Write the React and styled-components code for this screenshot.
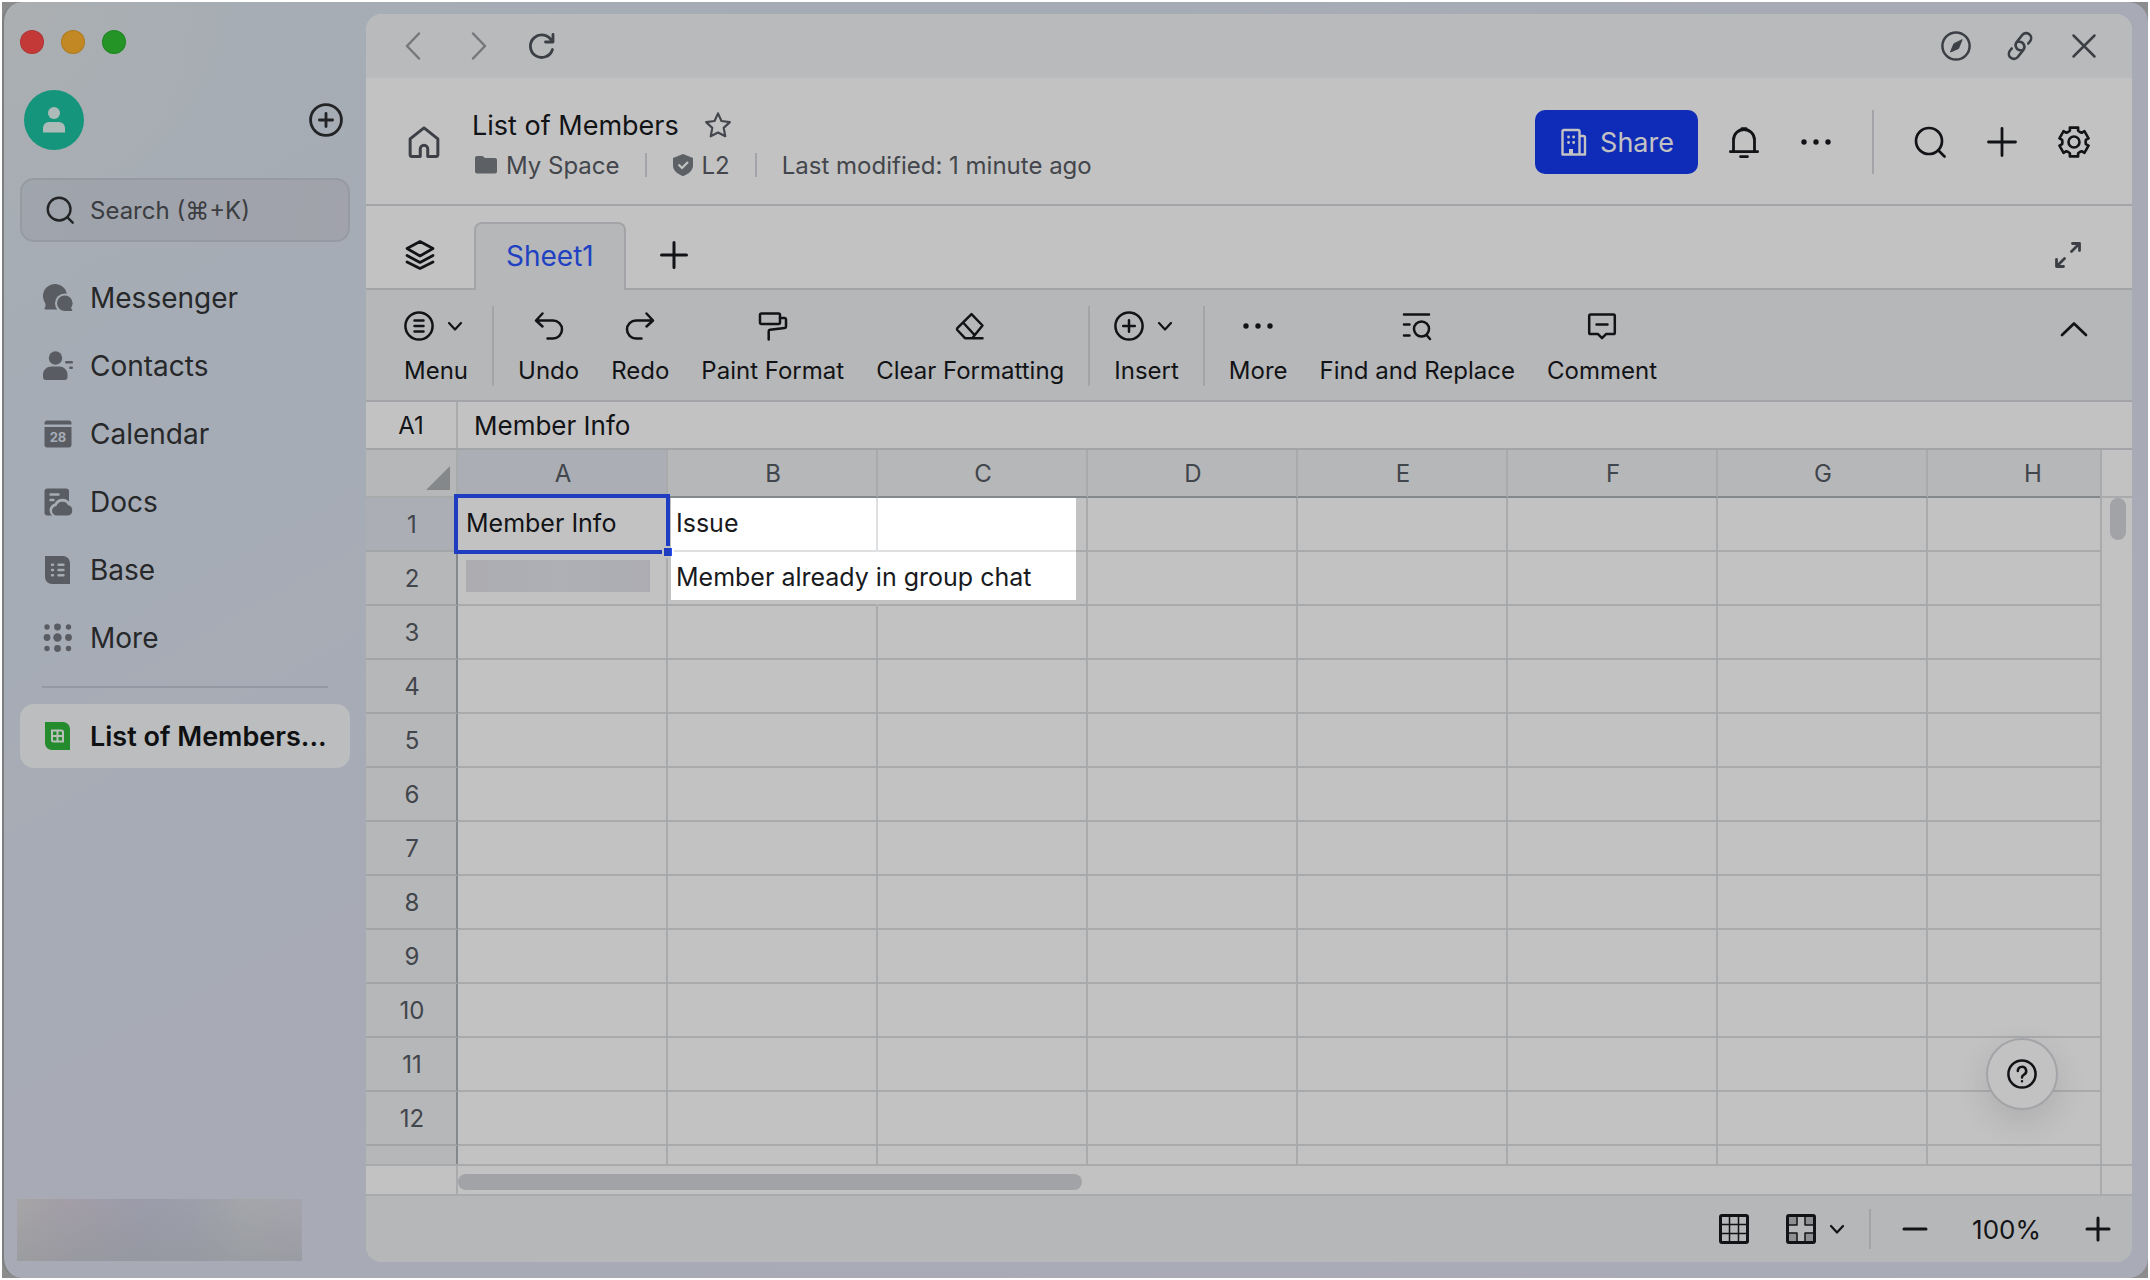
import styled, {createGlobalStyle, css} from "styled-components";
import {useState} from "react";

const GlobalStyle = createGlobalStyle`
  *, *::before, *::after {
    box-sizing: border-box;
  }

  body {
    margin: 0;
    background: #fff;
    color: #181a1d;
    font-family: Inter, "Liberation Sans", sans-serif;
    font-size: 24px;
  }

  button, input {
    font: inherit;
    color: inherit;
    border: 0;
    padding: 0;
    background: none;
  }

  button {
    cursor: pointer;
  }

  a {
    color: inherit;
    text-decoration: none;
  }

  svg {
    display: block;
    flex: none;
  }
`;

const line = "#d7d8dd";
const gridLine = "#dee0e2";
const darkLine = "#afb3b7";
const barBg = "#f0f1f3";

/* ---------- window ---------- */

const Screen = styled.div`
  height: 100vh;
  padding: 2px;
`;

const Desktop = styled.div`
  position: relative;
  height: 100%;
  overflow: hidden;
  background: #b8b8b8;
`;

const Window = styled.div`
  display: flex;
  height: 100%;
  border-radius: 20px;
  border-left: 2px solid #a4a8a8;
  background:
    radial-gradient(circle at 0 0, #e2e6e9 0, transparent 260px),
    linear-gradient(150deg, #dae4ed 0%, #dae3ee 18%, #dce1ee 36%, #dde0ee 55%, #dfe1f0 100%);
`;

/* 강조 영역 밖을 어둡게 덮는 마스크 */
const Spotlight = styled.div`
  position: absolute;
  z-index: 10;
  left: 669px;
  top: 496px;
  width: 405px;
  height: 102px;
  box-shadow: 0 0 0 9999px rgba(0, 0, 0, 0.24);
  pointer-events: none;
`;

/* ---------- sidebar ---------- */

const Sidebar = styled.aside`
  display: flex;
  flex-direction: column;
  flex: none;
  width: 362px;
  padding: 28px 16px 17px;
`;

const TrafficLights = styled.div`
  display: flex;
  gap: 17px;
`;

const Light = styled.button`
  width: 24px;
  height: 24px;
  border-radius: 50%;
  background: ${({$color}) => $color};
  box-shadow: inset 0 0 0 1px rgba(0, 0, 0, 0.1);
`;

const Profile = styled.div`
  display: flex;
  align-items: center;
  justify-content: space-between;
  margin-top: 36px;
  padding: 0 7px 0 4px;
`;

const Avatar = styled.button`
  display: grid;
  place-items: center;
  width: 60px;
  height: 60px;
  border-radius: 50%;
  background: #1cc5a3;
  color: #e3f6f2;
`;

const SearchBox = styled.label`
  display: flex;
  align-items: center;
  gap: 16px;
  height: 64px;
  margin-top: 28px;
  padding: 0 24px;
  border: 2px solid #c4cbd7;
  border-radius: 14px;
  background: linear-gradient(100deg, #d1d9e3, #d4d5e1);
  color: #2e3032;

  input {
    flex: 1;
    min-width: 0;
    outline: none;
  }

  input::placeholder {
    color: #4e5155;
    opacity: 1;
  }
`;

const Nav = styled.nav`
  display: flex;
  flex-direction: column;
  gap: 4px;
  margin-top: 24px;
`;

const NavItem = styled.a`
  display: flex;
  align-items: center;
  gap: 17px;
  height: 64px;
  padding: 0 16px 0 23px;
  border-radius: 14px;
  font-size: 28px;
  color: #333538;
  white-space: nowrap;

  svg {
    color: #757981;
  }

  ${({$active}) => $active && css`
    background: #f8f9fc;
    color: #151618;
    font-size: 27px;
    font-weight: 600;

    svg {
      color: #31b73e;
    }
  `}
`;

const NavDivider = styled.hr`
  width: calc(100% - 44px);
  height: 2px;
  margin: 16px auto;
  border: 0;
  background: #c3c8d5;
`;

const AccountPlate = styled.div`
  width: 285px;
  height: 62px;
  margin: auto 0 0 -3px;
  background:
    linear-gradient(180deg, transparent, rgba(190, 196, 202, 0.5)),
    linear-gradient(90deg, #dbd9dc 0%, #d6d0dc 18%, #cdcde0 42%, #cfd1e1 62%, #d8dadf 80%, #dad8e4 100%);
`;

/* ---------- content panel ---------- */

const Panel = styled.main`
  display: flex;
  flex-direction: column;
  flex: 1;
  min-width: 0;
  margin: 12px 16px 16px 0;
  border-radius: 16px;
  background: #fff;
  overflow: hidden;
`;

const IconButton = styled.button`
  display: flex;
  align-items: center;
  color: ${({$color}) => $color || "inherit"};
`;

const TopBar = styled.div`
  display: flex;
  align-items: center;
  gap: 34px;
  flex: none;
  height: 64px;
  padding: 0 33px 0 32px;
  background: #f4f5f6;
  color: #4f545b;
`;

const Spacer = styled.div`
  flex: 1;
`;

const Header = styled.header`
  display: flex;
  align-items: center;
  flex: none;
  height: 128px;
  padding: 2px 42px 0;
  border-bottom: 2px solid ${line};
`;

const HomeLink = styled.a`
  margin-right: 32px;
  color: #4f545b;
`;

const TitleBlock = styled.div`
  display: flex;
  flex-direction: column;
  gap: 4px;
  padding-bottom: 2px;
  color: #585d64;
`;

const TitleRow = styled.div`
  display: flex;
  align-items: center;
  gap: 25px;
  height: 44px;

  h1 {
    margin: 0;
    font-size: 27px;
    font-weight: 400;
    color: #181a1d;
  }
`;

const MetaRow = styled.div`
  display: flex;
  align-items: center;
  gap: 25px;
  height: 28px;
  padding-left: 2px;

  a, span {
    display: flex;
    align-items: center;
    gap: 8px;
  }
`;

const VDivider = styled.i`
  flex: none;
  width: 2px;
  height: ${({$height}) => $height}px;
  background: ${line};
`;

const Actions = styled.div`
  display: flex;
  align-items: center;
  gap: 40px;
  margin-left: 30px;
`;

const ShareButton = styled.button`
  display: flex;
  align-items: center;
  justify-content: center;
  gap: 12px;
  height: 64px;
  padding: 0 24px 0 25px;
  border-radius: 10px;
  background: #153af2;
  color: #fff;
  font-size: 27px;
`;

/* ---------- sheet tabs ---------- */

const TabBar = styled.div`
  display: flex;
  align-items: center;
  flex: none;
  height: 84px;
  padding: 16px 49px 0 39px;
  border-bottom: 2px solid ${line};
`;

const Tab = styled.button`
  height: 68px;
  margin: 0 33px -2px 39px;
  padding: 0 30px 2px;
  border: 2px solid ${line};
  border-bottom: 0;
  border-radius: 8px 8px 0 0;
  background: ${barBg};
  color: #2b56ff;
  font-size: 28px;
`;

/* ---------- toolbar ---------- */

const Toolbar = styled.div`
  display: flex;
  align-items: flex-start;
  gap: 24px;
  flex: none;
  height: 112px;
  padding: 16px 43px 0 38px;
  border-bottom: 2px solid ${line};
  background: ${barBg};
`;

const ToolGroup = styled.div`
  display: flex;
  gap: 32px;
`;

const ToolButton = styled.button`
  display: flex;
  flex-direction: column;
  align-items: ${({$menu}) => ($menu ? "flex-start" : "center")};
  gap: 16px;
  height: 80px;
  padding-top: 5px;
  line-height: 28px;
  white-space: nowrap;

  span {
    display: flex;
    align-items: center;
    gap: 13px;
    height: 30px;
  }
`;

const CollapseButton = styled(IconButton)`
  height: 46px;
`;

/* ---------- formula bar ---------- */

const FormulaBar = styled.div`
  display: flex;
  flex: none;
  height: 48px;
  border-bottom: 2px solid ${line};
`;

const CellName = styled.input`
  width: 92px;
  border-right: 2px solid ${gridLine};
  text-align: center;
`;

const FormulaInput = styled.input`
  flex: 1;
  min-width: 0;
  padding: 0 16px;
  font-size: 26px;
`;

/* ---------- grid ---------- */

const SheetBody = styled.div`
  position: relative;
  display: flex;
  flex: 1;
  min-height: 0;
  border-bottom: 2px solid ${gridLine};
`;

const GridPane = styled.div`
  flex: 1;
  min-width: 0;
  overflow: hidden;
  border-right: 2px solid ${gridLine};
`;

const Grid = styled.table`
  width: 1772px;
  table-layout: fixed;
  border-collapse: separate;
  border-spacing: 0;

  col {
    width: 210px;
  }

  col:first-child {
    width: 92px;
  }
`;

const ColHead = styled.th`
  height: 48px;
  padding: 1px 0 0 2px;
  border-right: 2px solid ${gridLine};
  border-bottom: 2px solid ${darkLine};
  background: ${({$selected}) => ($selected ? "#e2e5ef" : barBg)};
  color: #565b64;
  font-weight: 400;
`;

const Corner = styled(ColHead)`
  padding: 0;
  border-bottom-color: ${gridLine};

  &::after {
    content: "";
    display: block;
    width: 24px;
    height: 24px;
    margin: 16px 6px 6px auto;
    background: ${darkLine};
    clip-path: polygon(100% 0, 100% 100%, 0 100%);
  }
`;

const RowHead = styled.th`
  height: 54px;
  padding: 1px 0 0 2px;
  border-right: 2px solid ${darkLine};
  border-bottom: 2px solid ${line};
  background: ${({$selected}) => ($selected ? "#e2e5ef" : barBg)};
  color: #565b64;
  font-weight: 400;
`;

const Cell = styled.td`
  position: relative;
  height: 54px;
  padding: 0 8px 2px;
  border-right: 2px solid ${({$spill}) => ($spill ? "transparent" : gridLine)};
  border-bottom: 2px solid ${gridLine};
  font-size: 25px;
  line-height: 32px;
  white-space: nowrap;
`;

const Selection = styled.div`
  position: absolute;
  z-index: 1;
  inset: -4px;
  border: 4px solid #2951fd;

  &::after {
    content: "";
    position: absolute;
    right: -6px;
    bottom: -6px;
    width: 8px;
    height: 8px;
    background: #2951fd;
    box-shadow: 0 0 0 2px #fff;
  }
`;

const Redacted = styled.div`
  width: 184px;
  height: 32px;
  margin-bottom: 2px;
  background: linear-gradient(90deg, #e2e2e8, #e6e8ee 50%, #e3e3ea);
`;

const VRail = styled.div`
  flex: none;
  width: 30px;
  padding: 0 6px 0 8px;

  &::before {
    content: "";
    display: block;
    height: 48px;
    margin: 0 -6px 0 -8px;
    border-bottom: 2px solid ${gridLine};
  }
`;

const Thumb = styled.div`
  width: ${({$width}) => $width};
  height: ${({$height}) => $height};
  border-radius: 8px;
  background: #d5d6db;
`;

const HRail = styled.div`
  display: flex;
  flex: none;
  height: 30px;
  border-bottom: 2px solid ${gridLine};
`;

const RailCorner = styled.div`
  width: 92px;
  border-right: 2px solid ${gridLine};
`;

const RailTrack = styled.div`
  flex: 1;
  margin-right: 30px;
  padding-top: 8px;
  border-right: 2px solid ${gridLine};
`;

const HelpButton = styled.button`
  position: absolute;
  right: 74px;
  bottom: 54px;
  display: grid;
  place-items: center;
  width: 72px;
  height: 72px;
  border: 2px solid ${line};
  border-radius: 50%;
  background: #fff;
  box-shadow: 0 12px 32px rgba(31, 35, 41, 0.12);
`;

const Footer = styled.footer`
  display: flex;
  align-items: center;
  justify-content: flex-end;
  flex: none;
  gap: 24px;
  height: 66px;
  padding-right: 21px;
  background: ${barBg};
`;

const ViewTools = styled.div`
  display: flex;
  align-items: center;
  gap: 37px;
`;

const ZoomTools = styled.div`
  display: flex;
  align-items: center;
  gap: 44px;
  padding-left: 7px;
`;

const ZoomValue = styled.button`
  font-size: 26px;
`;

const SplitButton = styled(IconButton)`
  gap: 13px;
`;

/* ---------- icons ---------- */

const Stroke = ({size = 30, box = 30, width = 2.5, children}) => (
    <svg width={size} height={size} viewBox={`0 0 ${box} ${box}`} fill="none" stroke="currentColor"
         strokeWidth={width} strokeLinecap="round" strokeLinejoin="round" aria-hidden="true">
        {children}
    </svg>
);

const Fill = ({size = 30, box = 30, children}) => (
    <svg width={size} height={size} viewBox={`0 0 ${box} ${box}`} fill="currentColor" aria-hidden="true">
        {children}
    </svg>
);

const Chevron = () => (
    <svg width="16" height="16" viewBox="0 0 16 16" fill="none" stroke="currentColor" strokeWidth="2.2"
         strokeLinecap="round" strokeLinejoin="round" aria-hidden="true">
        <path d="M2 5l6 6.5L14 5"/>
    </svg>
);

// 톱니 6개짜리 기어 외곽선
const gearPoints = Array.from({length: 6}, (_, i) => {
    const at = (deg, r) => {
        const rad = (deg * Math.PI) / 180;
        return `${(16 + r * Math.cos(rad)).toFixed(2)},${(16 + r * Math.sin(rad)).toFixed(2)}`;
    };
    const c = i * 60 - 90;
    return [at(c - 20, 12), at(c - 16, 15), at(c + 16, 15), at(c + 20, 12), at(c + 30, 11.6)].join(" ");
}).join(" ");

const PersonIcon = () => (
    <Fill size={28} box={28}>
        <circle cx="14" cy="7" r="6"/>
        <path d="M3 26.5V22a6 6 0 0 1 6-6h10a6 6 0 0 1 6 6v4.5z"/>
    </Fill>
);

const CirclePlusIcon = ({size}) => (
    <Stroke size={size}>
        <circle cx="15" cy="15" r="13.6"/>
        <path d="M15 9.2v11.6M9.2 15h11.6"/>
    </Stroke>
);

const MessengerIcon = () => (
    <Fill>
        <mask id="bubble-cut">
            <rect width="30" height="30" fill="#fff"/>
            <circle cx="21.8" cy="20.2" r="9.8" fill="#000"/>
        </mask>
        <g mask="url(#bubble-cut)">
            <circle cx="12" cy="13" r="12"/>
            <path d="M2.5 20v3.5l-.8 1.3c-.5.9 0 1.7 1 1.7H14V20z"/>
        </g>
        <circle cx="21.8" cy="20.2" r="7.8"/>
        <path d="M22 28h6.3c.9 0 1.300-.8.8-1.5l-1-1.3V22H22z"/>
    </Fill>
);

const ContactsIcon = () => (
    <Fill>
        <circle cx="12.5" cy="7" r="6.7"/>
        <path d="M0 26v-2.5C0 19 4 15.5 8.5 15.5h7.5c4.5 0 8.5 3.5 8.5 8V26a3 3 0 0 1-3 3H3a3 3 0 0 1-3-3z"/>
        <rect x="22" y="10" width="8" height="2.6" rx="1.3"/>
        <rect x="26" y="15.4" width="4" height="2.6" rx="1.3"/>
    </Fill>
);

const CalendarIcon = () => (
    <Fill>
        <path d="M1.5 4.2A2.7 2.7 0 0 1 4.2 1.5h21.6a2.7 2.7 0 0 1 2.7 2.7v1.2h-27z"/>
        <path d="M1.5 8h27v17.8a2.7 2.7 0 0 1-2.7 2.7H4.2a2.7 2.7 0 0 1-2.7-2.7z"/>
        <text x="15" y="22.5" textAnchor="middle" fontSize="13" fontWeight="700" fill="#dbe2ee">28</text>
    </Fill>
);

const DocsIcon = () => (
    <Fill>
        <mask id="cloud-cut">
            <rect width="30" height="30" fill="#fff"/>
            <path d="M7.5 7.5h8M7.5 13h3" stroke="#000" strokeWidth="2.4" strokeLinecap="round"/>
            <path d="M14 28a4.7 4.7 0 0 1-.5-9.4 6.3 6.3 0 0 1 11.6-.8A5.2 5.2 0 0 1 25 28z"
                  fill="#000" stroke="#000" strokeWidth="5"/>
        </mask>
        <rect mask="url(#cloud-cut)" x="1.5" y="1.5" width="24.5" height="27" rx="3"/>
        <path d="M14 28.5a4.7 4.7 0 0 1-.5-9.4 6.3 6.3 0 0 1 11.6-.8A5.2 5.2 0 0 1 25 28.5z"/>
    </Fill>
);

const BaseIcon = () => (
    <Fill>
        <path d="M2 1h18a7 7 0 0 1 7 7v21H9a7 7 0 0 1-7-7z"/>
        <path d="M9 9.8h1M9 15h1M9 20.2h1M15.5 9.8h5M15.5 15h5M15.5 20.2h5"
              stroke="#dbe1ec" strokeWidth="2.4" strokeLinecap="round"/>
    </Fill>
);

const SheetDocIcon = () => (
    <Fill>
        <path d="M2 1h18a7 7 0 0 1 7 7v21H9a7 7 0 0 1-7-7z"/>
        <path d="M9 9.5h9.5A1.5 1.5 0 0 1 20 11v9.5h-9.5A1.5 1.5 0 0 1 9 19zM14.5 9.5v11M9 15h11"
              fill="none" stroke="#f3fbf4" strokeWidth="2"/>
    </Fill>
);

const MoreDotsIcon = () => (
    <Fill>
        {[4, 14.5, 25.5].map((y, row) => [4, 14.5, 25.5].map((x, col) => (
            <circle key={`${x}-${y}`} cx={x} cy={y} r={row === 1 && col === 1 ? 4.2 : row === 1 || col === 1 ? 3.4 : 2.7}/>
        )))}
    </Fill>
);

const SearchIcon = ({size = 30}) => (
    <Stroke size={size} box={32} width={2.7}>
        <circle cx="15" cy="15" r="13"/>
        <path d="M24.5 24.5l6 6"/>
    </Stroke>
);

const EllipsisIcon = () => (
    <Fill size={32} box={32}>
        <circle cx="4" cy="16" r="2.7"/>
        <circle cx="16" cy="16" r="2.7"/>
        <circle cx="28" cy="16" r="2.7"/>
    </Fill>
);

const LinkIcon = () => (
    <Stroke width={2.6}>
        <g transform="translate(15 15) rotate(-52)">
            <path d="M7 5H10A5 5 0 0 0 10-5H1A5 5 0 0 0-2.500 3.600"/>
            <path d="M-7-5H-10A5 5 0 0 0-10 5H-1A5 5 0 0 0 2.500-3.600"/>
        </g>
    </Stroke>
);

/* ---------- data ---------- */

const navItems = [
    {label: "Messenger", icon: <MessengerIcon/>},
    {label: "Contacts", icon: <ContactsIcon/>},
    {label: "Calendar", icon: <CalendarIcon/>},
    {label: "Docs", icon: <DocsIcon/>},
    {label: "Base", icon: <BaseIcon/>},
    {label: "More", icon: <MoreDotsIcon/>},
];

const toolGroups = [
    [
        {
            label: "Menu",
            menu: true,
            icon: <Stroke><circle cx="15" cy="15" r="13.6"/><path d="M10.5 9.5h9M10.5 15h9M10.5 20.5h9"/></Stroke>,
        },
    ],
    [
        {
            label: "Undo",
            icon: <Stroke><path d="M8.5 2.5L2 9.500l6.500 6M2.500 9.500H19a9 9 0 0 1 0 18h-5.500"/></Stroke>,
        },
        {
            label: "Redo",
            icon: <Stroke><path d="M21.5 2.5l6.500 7-6.500 6M27.500 9.500H11a9 9 0 0 0 0 18h5.500"/></Stroke>,
        },
        {
            label: "Paint Format",
            icon: (
                <Stroke>
                    <rect x="2" y="2.5" width="20" height="10.5" rx="1.5"/>
                    <path d="M22 7h4.500a1.500 1.500 0 0 1 1.500 1.500v7a1.500 1.500 0 0 1-1.300 1.500L12 18.800a1.500 1.500 0 0 0-1.300 1.500V28.500"/>
                </Stroke>
            ),
        },
        {
            label: "Clear Formatting",
            icon: (
                <Stroke>
                    <path d="M16.5 3.200l11 11.300-10.300 12.700H10L2.300 19a1.500 1.500 0 0 1 0-1.800zM9 12.500l10.500 11.500M17 27.200h10.500"/>
                </Stroke>
            ),
        },
    ],
    [
        {label: "Insert", menu: true, icon: <CirclePlusIcon/>},
    ],
    [
        {label: "More", icon: <EllipsisIcon/>},
        {
            label: "Find and Replace",
            icon: (
                <Stroke>
                    <path d="M2 3.500h25M2 13.500h5.500M2 24.500h5.500M24.500 24l3.500 4"/>
                    <circle cx="19.5" cy="18" r="7.5"/>
                </Stroke>
            ),
        },
        {
            label: "Comment",
            icon: (
                <Stroke>
                    <path d="M3.500 3.500h23a1.300 1.300 0 0 1 1.300 1.300v17a1.300 1.300 0 0 1-1.300 1.300H19l-4 4-4-4H3.500a1.300 1.300 0 0 1-1.300-1.300v-17a1.300 1.300 0 0 1 1.300-1.300zM9.500 13.500h11"/>
                </Stroke>
            ),
        },
    ],
];

const columns = ["A", "B", "C", "D", "E", "F", "G", "H"];
const rows = Array.from({length: 12}, (_, i) => i + 1);

const cells = {
    A1: <>Member Info<Selection/></>,
    A2: <Redacted/>,
    B1: "Issue",
    B2: "Member already in group chat",
};

/* ---------- components ---------- */

const SideMenu = () => (
    <Sidebar>
        <TrafficLights>
            <Light $color="#ff4c4a" aria-label="Close window"/>
            <Light $color="#feb32e" aria-label="Minimize window"/>
            <Light $color="#2ec331" aria-label="Zoom window"/>
        </TrafficLights>
        <Profile>
            <Avatar aria-label="Profile"><PersonIcon/></Avatar>
            <IconButton $color="#2e3032" aria-label="Create"><CirclePlusIcon size={34}/></IconButton>
        </Profile>
        <SearchBox>
            <SearchIcon size={28}/>
            <input type="text" placeholder="Search (⌘+K)" aria-label="Search"/>
        </SearchBox>
        <Nav>
            {navItems.map(({label, icon}) => (
                <NavItem key={label} href="#">{icon}{label}</NavItem>
            ))}
        </Nav>
        <NavDivider/>
        <NavItem href="#" $active><SheetDocIcon/>List of Members...</NavItem>
        <AccountPlate/>
    </Sidebar>
);

const BrowserBar = () => (
    <TopBar>
        <IconButton $color="#9a9da1" aria-label="Back"><Stroke><path d="M21 2.5L9 15l12 12.5"/></Stroke></IconButton>
        <IconButton $color="#9a9da1" aria-label="Forward"><Stroke><path d="M11 2.5L23 15 11 27.5"/></Stroke></IconButton>
        <IconButton aria-label="Reload">
            <Stroke width={2.8}>
                <path d="M26.5 18.5A11.3 11.3 0 1 1 26 10.5M27 3.5V11h-7.5"/>
            </Stroke>
        </IconButton>
        <Spacer/>
        <IconButton aria-label="Open in browser">
            <Stroke>
                <circle cx="15" cy="15" r="13.6"/>
                <path d="M21 9l-3.500 8.500L9.500 21l3.300-8z" fill="currentColor" strokeWidth="1"/>
            </Stroke>
        </IconButton>
        <IconButton aria-label="Copy link"><LinkIcon/></IconButton>
        <IconButton aria-label="Close"><Stroke><path d="M4.5 4.5l21 21M25.5 4.5l-21 21"/></Stroke></IconButton>
    </TopBar>
);

const DocHeader = () => (
    <Header>
        <HomeLink href="#" aria-label="Home">
            <Stroke width={2.8} size={32}>
                <path d="M2 12L15 1.8 28 12v15a1.5 1.5 0 0 1-1.5 1.5h-8v-7a3.5 3.5 0 0 0-7 0v7h-8A1.5 1.5 0 0 1 2 27z"/>
            </Stroke>
        </HomeLink>
        <TitleBlock>
            <TitleRow>
                <h1>List of Members</h1>
                <IconButton aria-label="Add to favorites">
                    <Stroke size={28} width={2.3}>
                        <path d="M15 2.5l3.700 8.200 9 1.200-6.600 6.200 1.700 9-7.800-4-7.800 4 1.700-9-6.600-6.200 9-1.200z"/>
                    </Stroke>
                </IconButton>
            </TitleRow>
            <MetaRow>
                <a href="#">
                    <Fill size={24} box={24}>
                        <path d="M1 5a2 2 0 0 1 2-2h5.5L11 5h10a2 2 0 0 1 2 2v11.5a2 2 0 0 1-2 2H3a2 2 0 0 1-2-2z" fill="#7b8087"/>
                    </Fill>
                    My Space
                </a>
                <VDivider $height={24}/>
                <span>
                    <svg width="22" height="24" viewBox="0 0 22 24" aria-hidden="true">
                        <path d="M11 1l10 4v7.5c0 5-4.500 8.500-10 10.700C5.500 21 1 17.500 1 12.500V5z" fill="#7b8087"/>
                        <path d="M6.5 11.5L10 15l6-6" fill="none" stroke="#fff" strokeWidth="2.2"/>
                    </svg>
                    L2
                </span>
                <VDivider $height={24}/>
                <span>Last modified: 1 minute ago</span>
            </MetaRow>
        </TitleBlock>
        <Spacer/>
        <ShareButton>
            <Stroke size={28} box={28} width={2.4}>
                <path d="M2.5 26.5v-23A1.5 1.5 0 0 1 4 2h14a1.5 1.5 0 0 1 1.5 1.5v23zM19.5 8h4A1.5 1.5 0 0 1 25 9.500v17h-5.500"/>
                <path d="M8.5 9h.1M13.6 9h.1M8.5 14.5h.1M13.6 14.5h.1" strokeWidth="2.8"/>
                <path d="M11 26v-5" strokeWidth="4" strokeLinecap="butt"/>
            </Stroke>
            Share
        </ShareButton>
        <Actions>
            <IconButton aria-label="Notifications">
                <Stroke size={32} box={32} width={2.8}>
                    <path d="M5.5 25.5V14a10.5 10.5 0 0 1 21 0v11.500M2.400 25.700h27.200M12.500 30.600h7"/>
                    <path d="M14 2.6h4"/>
                </Stroke>
            </IconButton>
            <IconButton aria-label="More actions"><EllipsisIcon/></IconButton>
            <VDivider $height={64}/>
            <IconButton aria-label="Search"><SearchIcon size={32}/></IconButton>
            <IconButton aria-label="New">
                <Stroke size={32} box={32} width={2.8}><path d="M16 2.5v27M2.5 16h27"/></Stroke>
            </IconButton>
            <IconButton aria-label="Settings">
                <Stroke size={32} box={32} width={2.6}>
                    <polygon points={gearPoints}/>
                    <circle cx="16" cy="16" r="5.5"/>
                </Stroke>
            </IconButton>
        </Actions>
    </Header>
);

const SheetTabs = () => (
    <TabBar>
        <IconButton aria-label="All sheets">
            <Stroke width={2.7}>
                <path d="M15 1.5l13 7L15 16 2 8.5zM2 15.5l13 7 13-7M2 22l13 6.5L28 22"/>
            </Stroke>
        </IconButton>
        <Tab>Sheet1</Tab>
        <IconButton aria-label="Add sheet"><Stroke width={3}><path d="M15 2.5v25M2.5 15h25"/></Stroke></IconButton>
        <Spacer/>
        <IconButton $color="#4f545b" aria-label="Full screen">
            <Stroke width={2.8}>
                <path d="M19.5 3.500h7v7M26 4l-7.500 7.500M3.500 19.500v7h7M4 26l7.500-7.500"/>
            </Stroke>
        </IconButton>
    </TabBar>
);

const SheetToolbar = () => (
    <Toolbar>
        {toolGroups.map((group, i) => [
            i > 0 && <VDivider key={`divider-${i}`} $height={80}/>,
            <ToolGroup key={i}>
                {group.map(({label, icon, menu}) => (
                    <ToolButton key={label} $menu={menu}>
                        <span>{icon}{menu && <Chevron/>}</span>
                        {label}
                    </ToolButton>
                ))}
            </ToolGroup>,
        ])}
        <Spacer/>
        <CollapseButton aria-label="Collapse toolbar"><Stroke width={2.7}><path d="M3 21L15 9.5 27 21"/></Stroke></CollapseButton>
    </Toolbar>
);

const Spreadsheet = () => (
    <>
        <SheetBody>
            <GridPane>
                <Grid>
                    <colgroup>
                        <col/>
                        {columns.map(col => <col key={col}/>)}
                    </colgroup>
                    <thead>
                        <tr>
                            <Corner/>
                            {columns.map(col => <ColHead key={col} scope="col" $selected={col === "A"}>{col}</ColHead>)}
                        </tr>
                    </thead>
                    <tbody>
                        {rows.map(row => (
                            <tr key={row}>
                                <RowHead scope="row" $selected={row === 1}>{row}</RowHead>
                                {columns.map(col => (
                                    <Cell key={col} $spill={col + row === "B2"}>{cells[col + row]}</Cell>
                                ))}
                            </tr>
                        ))}
                        {/* 아래쪽에 걸친 빈 행 */}
                        <tr>
                            <RowHead/>
                            {columns.map(col => <Cell key={col}/>)}
                        </tr>
                    </tbody>
                </Grid>
            </GridPane>
            <VRail><Thumb $width="16px" $height="42px"/></VRail>
            <HelpButton aria-label="Help">
                <Stroke>
                    <circle cx="15" cy="15" r="13.6"/>
                    <path d="M10.8 12a4.2 4.2 0 1 1 6.2 3.7c-1.3.7-2 1.5-2 2.8M15 22.2v.1"/>
                </Stroke>
            </HelpButton>
        </SheetBody>
        <HRail>
            <RailCorner/>
            <RailTrack><Thumb $width="38%" $height="16px"/></RailTrack>
        </HRail>
    </>
);

const StatusBar = () => (
    <Footer>
        <ViewTools>
            <IconButton aria-label="Grid lines">
                <Stroke>
                    <rect x="1.5" y="1.5" width="27" height="27" rx="1.5" strokeWidth="3"/>
                    <path d="M10.5 2v26M19.5 2v26M2 10.5h26M2 19.5h26" strokeWidth="1.5"/>
                </Stroke>
            </IconButton>
            <SplitButton aria-label="Freeze">
                <Stroke>
                    <path d="M2 2h9v9H2zM19 2h9v9h-9zM2 19h9v9H2zM19 19h9v9h-9z" fill="#bcbdbf" strokeWidth="1.5"/>
                    <rect x="1.5" y="1.5" width="27" height="27" rx="1.5" strokeWidth="3"/>
                </Stroke>
                <Chevron/>
            </SplitButton>
        </ViewTools>
        <VDivider $height={40}/>
        <ZoomTools>
            <IconButton aria-label="Zoom out"><Stroke size={26} box={26} width={3}><path d="M2 13h22"/></Stroke></IconButton>
            <ZoomValue>100%</ZoomValue>
            <IconButton aria-label="Zoom in"><Stroke size={26} box={26} width={3}><path d="M2 13h22M13 2v22"/></Stroke></IconButton>
        </ZoomTools>
    </Footer>
);

const App = () => {
    const [formula, setFormula] = useState("Member Info");

    return (
        <Screen>
            <GlobalStyle/>
            <Desktop>
                <Window>
                    <SideMenu/>
                    <Panel>
                        <BrowserBar/>
                        <DocHeader/>
                        <SheetTabs/>
                        <SheetToolbar/>
                        <FormulaBar>
                            <CellName aria-label="Cell" defaultValue="A1"/>
                            <FormulaInput aria-label="Formula" value={formula} onChange={e => setFormula(e.target.value)}/>
                        </FormulaBar>
                        <Spreadsheet/>
                        <StatusBar/>
                    </Panel>
                </Window>
                <Spotlight/>
            </Desktop>
        </Screen>
    );
};

export default App;
